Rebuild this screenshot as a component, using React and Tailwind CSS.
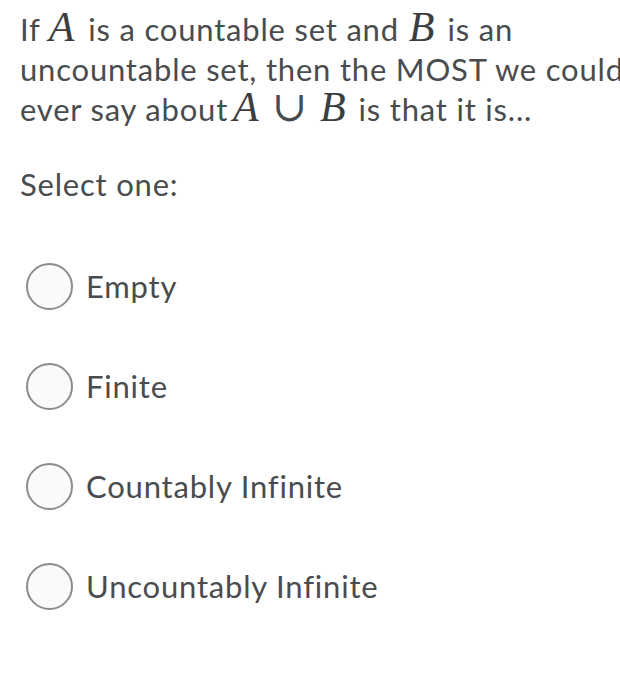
const OPTIONS = ["Empty", "Finite", "Countably Infinite", "Uncountably Infinite"];

function M({ children, className = "" }) {
  return (
    <span
      className={`italic text-[42px] leading-[0px] tracking-normal text-[#3b3e40] ${className}`}
      style={{ fontFamily: '"Liberation Serif", serif' }}
    >
      {children}
    </span>
  );
}

export default function App() {
  return (
    <div
      className="w-[620px] h-[677px] overflow-hidden bg-white text-[#494c4e]"
      style={{ fontFamily: 'Lato, "Noto Sans", sans-serif' }}
    >
      <div className="pl-5 pt-[9px] text-[31px] leading-[40px] tracking-[0.8px] whitespace-nowrap">
        <p>
          If<M className="ml-[8px] mr-[14px]">A</M>is a countable set and<M className="ml-[10px] mr-[13px]">B</M>is an
        </p>
        <p>uncountable set, then the MOST we could</p>
        <p>
          ever say about<M className="ml-[5px]">A</M>
          <span
            className="mx-[13px] text-[42px] leading-[0px] tracking-normal"
            style={{ fontFamily: '"DejaVu Sans ExtraLight", "DejaVu Serif", serif' }}
          >
            ∪
          </span>
          <M className="mr-[13px]">B</M>is that it is...
        </p>
        <p className="mt-[35px]">Select one:</p>
      </div>

      <div className="mt-[59px] flex flex-col gap-[53px]">
        {OPTIONS.map((o) => (
          <label key={o} className="flex items-center pl-[26px] gap-[13px] text-[31px] tracking-[0.8px] leading-[47px]">
            <span className="w-[47px] h-[47px] rounded-full border-2 border-[#8a8c8e] bg-[#f9fafb] shrink-0" />
            <span>{o}</span>
          </label>
        ))}
      </div>
    </div>
  );
}
